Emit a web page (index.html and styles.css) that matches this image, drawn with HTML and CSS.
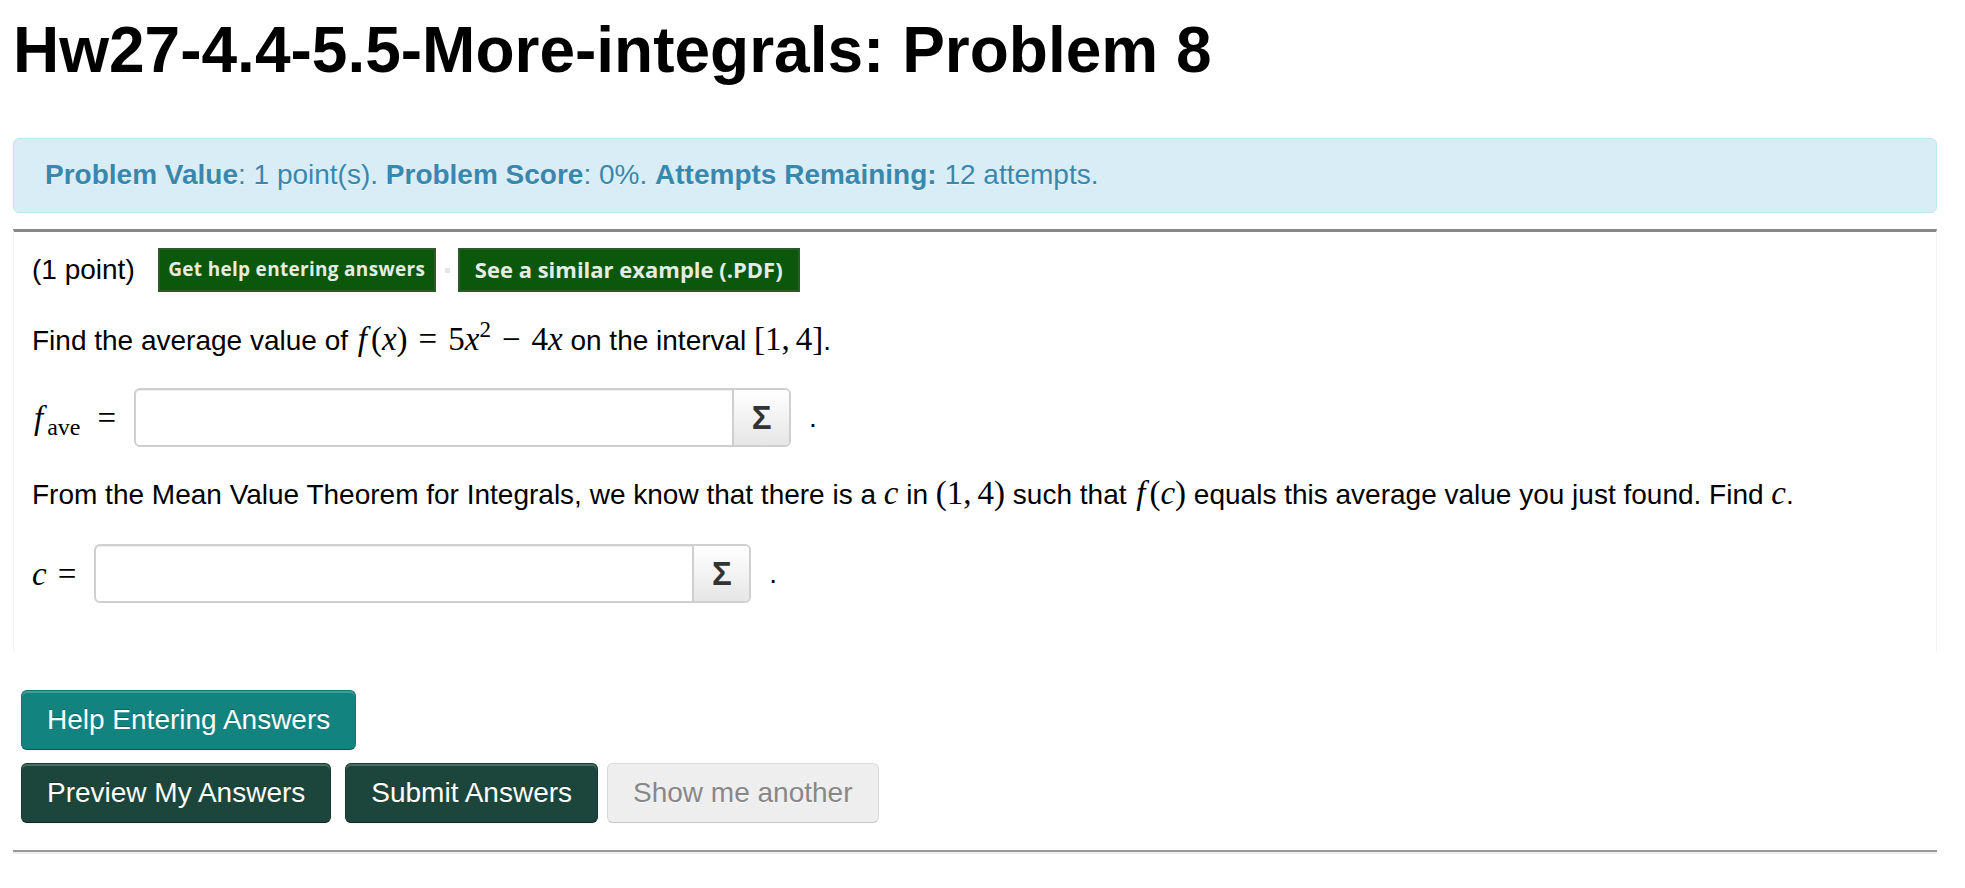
FILE: index.html
```html
<!DOCTYPE html>
<html lang="en">
<head>
    <meta charset="UTF-8">
    <title>Hw27-4.4-5.5-More-integrals: Problem 8</title>
    <link rel="stylesheet" href="styles.css">
</head>
<body>
    <div class="page">
        <h1 class="title">Hw27-4.4-5.5-More-integrals: Problem 8</h1>

        <div class="alert">
            <b>Problem Value</b>: 1 point(s). <b>Problem Score</b>: 0%. <b>Attempts Remaining:</b> 12 attempts.
        </div>

        <div class="problem">
            <div class="points-row">
                <span class="points">(1 point)</span>
                <a class="green-btn help-link" href="#">Get help entering answers</a>
                <span class="dot"></span>
                <a class="green-btn example-link" href="#">See a similar example (.PDF)</a>
            </div>

            <p class="text">Find the average value of <span class="math"><i class="fn">f</i>(<i>x</i>)<span class="op">=</span>5<i>x</i><sup>2</sup><span class="op">&minus;</span>4<i>x</i></span> on the interval <span class="math">[1,<span class="thin"></span>4]</span>.</p>

            <div class="answer-row">
                <span class="math label"><i class="fn">f</i><sub>ave</sub><span class="op">=</span></span>
                <div class="answer">
                    <input class="answer-input" type="text">
                    <button class="sigma" type="button">&Sigma;</button>
                </div>
                <span class="period">.</span>
            </div>

            <p class="text">From the Mean Value Theorem for Integrals, we know that there is a <span class="math"><i>c</i></span> in <span class="math">(1,<span class="thin"></span>4)</span> such that <span class="math"><i class="fn">f</i>(<i>c</i>)</span> equals this average value you just found. Find <span class="math"><i>c</i></span>.</p>

            <div class="answer-row">
                <span class="math label"><i>c</i><span class="op">=</span></span>
                <div class="answer">
                    <input class="answer-input" type="text">
                    <button class="sigma" type="button">&Sigma;</button>
                </div>
                <span class="period">.</span>
            </div>
        </div>

        <div class="actions">
            <div class="action-row">
                <button class="btn teal" type="button">Help Entering Answers</button>
            </div>
            <div class="action-row">
                <button class="btn dark preview" type="button">Preview My Answers</button>
                <button class="btn dark" type="button">Submit Answers</button>
                <button class="btn light" type="button">Show me another</button>
            </div>
        </div>

        <hr class="bottom-rule">
    </div>
</body>
</html>
```

FILE: styles.css
```css
body {
    margin: 0;
    background: #fff;
    color: #000;
    font-family: "Liberation Sans", Arial, Helvetica, sans-serif;
    font-size: 28px;
    line-height: 40px;
}
.page {
    margin-left: 13px;
    width: 1924px;
}
.title {
    margin: 14px 0 0;
    font-size: 64px;
    line-height: 72px;
    font-weight: bold;
}
.alert {
    margin-top: 52px;
    padding: 16px 20px 17px 31px;
    background: #d9edf7;
    border: 1px solid #bce8f1;
    border-radius: 6px;
    color: #3a87ad;
    text-shadow: 0 1px 0 rgba(255, 255, 255, 0.5);
}
.problem {
    margin-top: 16px;
    padding: 16px 18px 49px;
    border-top: 3px solid #878787;
    border-left: 1px solid #f3f3f3;
    border-right: 1px solid #f3f3f3;
}
.points-row {
    display: flex;
    align-items: center;
    height: 44px;
}
.points {
    margin-right: 23px;
}
.green-btn {
    display: block;
    height: 44px;
    box-sizing: border-box;
    background: #0b570b;
    border: 2px solid #2a5a2a;
    color: #e4ece4;
    font-family: "Open Sans", sans-serif;
    font-weight: bold;
    text-align: center;
    text-decoration: none;
    line-height: 38px;
}
.help-link {
    width: 278px;
    font-size: 19px;
    letter-spacing: 0.3px;
}
.example-link {
    width: 342px;
    font-size: 22px;
}
.dot {
    width: 5px;
    height: 5px;
    margin: 0 8px 0 9px;
    background: #e6e6e6;
}
.text {
    margin: 29px 0 0;
    height: 40px;
}
.answer-row + .text {
    margin-top: 28px;
}
.math,
.math * {
    line-height: 0;
}
.math {
    font-family: "Liberation Serif", "Times New Roman", serif;
    font-size: 33px;
}
.math .fn {
    padding: 0 4px 0 2px;
}
.math sup {
    font-size: 23px;
    vertical-align: 13px;
}
.math sub {
    font-size: 24px;
    vertical-align: -6px;
    margin-right: 6px;
}
.op {
    margin: 0 11px;
}
.thin {
    display: inline-block;
    width: 6px;
}
.answer-row {
    display: flex;
    align-items: center;
    margin-top: 27px;
}
.answer-row:last-child {
    margin-top: 29px;
}
.label {
    margin-right: 7px;
    line-height: 40px;
}
.answer {
    display: flex;
    width: 657px;
    height: 59px;
    box-sizing: border-box;
    border: 2px solid #cfcfcf;
    border-radius: 6px;
    overflow: hidden;
    box-shadow: inset 0 1px 1px rgba(0, 0, 0, 0.075);
}
.answer-input {
    flex: 1;
    border: none;
    outline: none;
    background: transparent;
    padding: 0 10px;
    font-size: 28px;
}
.sigma {
    width: 57px;
    border: none;
    border-left: 2px solid #cfcfcf;
    background: linear-gradient(#ffffff, #e6e6e6);
    color: #333;
    font-family: "Liberation Sans", Arial, sans-serif;
    font-size: 33px;
    font-weight: bold;
    padding: 0;
}
.period {
    margin-left: 18px;
}
.actions {
    margin-top: 38px;
    margin-left: 8px;
}
.action-row {
    display: flex;
    gap: 9px;
}
.action-row + .action-row {
    margin-top: 13px;
}
.btn {
    padding: 9px 25px;
    border: 1px solid;
    border-radius: 6px;
    font-family: "Liberation Sans", Arial, sans-serif;
    font-size: 28px;
    line-height: 40px;
    color: #fff;
    text-shadow: 0 -1px 0 rgba(0, 0, 0, 0.25);
    box-shadow: inset 0 2px 0 rgba(255, 255, 255, 0.2), 0 1px 2px rgba(0, 0, 0, 0.05);
}
.btn.teal {
    background: #13837f;
    border-color: #107672 #107672 #0b5a57;
}
.btn.dark {
    background: #1c463c;
    border-color: #17392f #17392f #0f2a22;
}
.btn.preview {
    margin-right: 5px;
}
.btn.light {
    background: #eeeeee;
    border-color: #d8d8d8 #d8d8d8 #c8c8c8;
    color: #878787;
    text-shadow: 0 1px 0 rgba(255, 255, 255, 0.75);
    box-shadow: none;
}
.bottom-rule {
    margin: 27px 0 0;
    height: 0;
    border: none;
    border-top: 2px solid #999;
    border-bottom: 2px solid #eeeeee;
}
```
